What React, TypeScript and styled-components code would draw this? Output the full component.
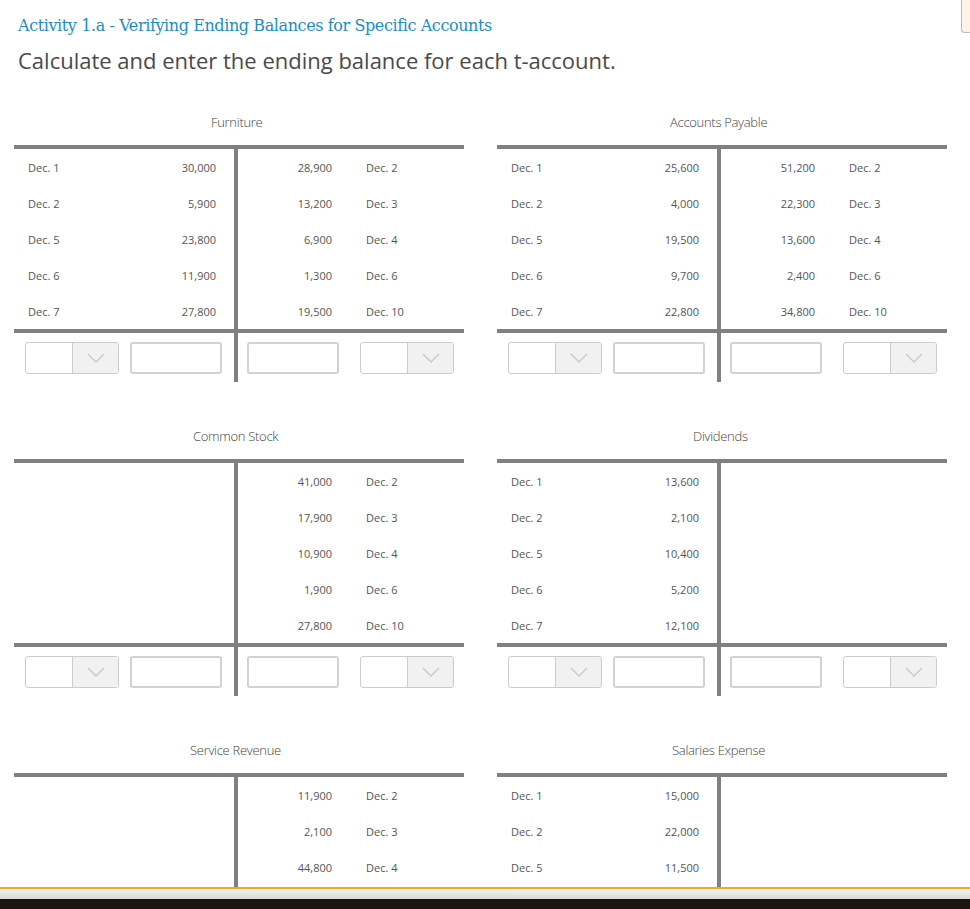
import React from "react";
import styled, { createGlobalStyle } from "styled-components";

const Global = createGlobalStyle`
  html, body { margin: 0; padding: 0; background: #fff; overflow: hidden; }
  body { font-family: "Open Sans", "Liberation Sans", sans-serif; }
`;

const Page = styled.div`
  width: 970px; height: 909px; position: relative; overflow: hidden; background: #fff;
`;
const Header = styled.div`padding: 16px 0 0 18px;`;
const Activity = styled.div`
  font-family: "DejaVu Serif", "Liberation Serif", serif; font-size: 16px; color: #1a8ec0; letter-spacing: -0.4px;
`;
const Heading = styled.h1`
  margin: 10px 0 0 0; font-weight: 400; font-size: 22px; color: #4a4a4a;
`;
const Tab = styled.div`
  position: absolute; right: 0; top: 0; width: 8px; height: 32px; background: #fdf3e8;
  border-left: 1px solid #bbb; border-bottom: 1px solid #bbb; border-bottom-left-radius: 4px;
`;
const Grid = styled.div`
  display: grid; grid-template-columns: 450px 450px; column-gap: 33px; row-gap: 46px;
  padding: 39px 0 0 14px;
`;
const Account = styled.div`display: flex; flex-direction: column;`;
const Title = styled.div<{ $shift: number }>`
  height: 31px; font-size: 13px; font-weight: 300; color: #444; letter-spacing: -0.3px;
  padding-left: ${(p) => p.$shift}px; line-height: 16px; padding-top: 0; box-sizing: border-box;
`;
const Bar = styled.div`height: 4px; background: #808080;`;
const Body = styled.div`display: grid; grid-template-columns: 220px 4px 226px;`;
const Divider = styled.div`background: #808080;`;
const Side = styled.div`display: flex; flex-direction: column;`;
const Row = styled.div`
  height: 36px; display: flex; align-items: center; font-size: 11px; color: #555;
`;
const DebitRow = styled(Row)`padding: 0 18px 0 14px; justify-content: space-between;`;
const Amount = styled.span`width: 94px; text-align: right;`;
const Label = styled.span`margin-left: 34px;`;
const InputSide = styled.div<{ $right?: boolean }>`
  display: flex; align-items: flex-start; padding: 9px 0 8px ${(p) => (p.$right ? 9 : 11)}px; gap: ${(p) => (p.$right ? 21 : 11)}px;
`;
const Select = styled.div`
  width: 94px; height: 32px; box-sizing: border-box; border: 1px solid #ccc; border-radius: 3px;
  display: flex; overflow: hidden; background: #fff;
`;
const SelBox = styled.div`flex: 1; border-right: 1px solid #ccc;`;
const SelArrow = styled.div`
  width: 45px; background: #f1f1f1; display: flex; align-items: center; justify-content: center;
`;
const TextBox = styled.div`
  width: 92px; height: 32px; box-sizing: border-box; border: 2px solid #d2d2d2; border-radius: 3px;
`;
const Footer = styled.div`
  position: absolute; left: 0; right: 0; top: 887px; height: 22px;
`;
const Orange = styled.div`height: 2px; background: #f0a81c;`;
const Fade = styled.div`height: 10px; background: linear-gradient(#f4f4f4, #d8d8d8);`;
const Dark = styled.div`height: 10px; background: #1c1510;`;

type Entry = [string, string];
type Acc = { name: string; shift: number; debit: Entry[]; credit: Entry[] };

const accounts: Acc[] = [
  { name: "Furniture", shift: 197, debit: [["Dec. 1","30,000"],["Dec. 2","5,900"],["Dec. 5","23,800"],["Dec. 6","11,900"],["Dec. 7","27,800"]],
    credit: [["Dec. 2","28,900"],["Dec. 3","13,200"],["Dec. 4","6,900"],["Dec. 6","1,300"],["Dec. 10","19,500"]] },
  { name: "Accounts Payable", shift: 173, debit: [["Dec. 1","25,600"],["Dec. 2","4,000"],["Dec. 5","19,500"],["Dec. 6","9,700"],["Dec. 7","22,800"]],
    credit: [["Dec. 2","51,200"],["Dec. 3","22,300"],["Dec. 4","13,600"],["Dec. 6","2,400"],["Dec. 10","34,800"]] },
  { name: "Common Stock", shift: 179, debit: [],
    credit: [["Dec. 2","41,000"],["Dec. 3","17,900"],["Dec. 4","10,900"],["Dec. 6","1,900"],["Dec. 10","27,800"]] },
  { name: "Dividends", shift: 196, debit: [["Dec. 1","13,600"],["Dec. 2","2,100"],["Dec. 5","10,400"],["Dec. 6","5,200"],["Dec. 7","12,100"]], credit: [] },
  { name: "Service Revenue", shift: 176, debit: [],
    credit: [["Dec. 2","11,900"],["Dec. 3","2,100"],["Dec. 4","44,800"]] },
  { name: "Salaries Expense", shift: 175, debit: [["Dec. 1","15,000"],["Dec. 2","22,000"],["Dec. 5","11,500"]], credit: [] },
];

const Chevron = () => (
  <svg width="20" height="12" viewBox="0 0 20 12"><path d="M2 2 L10 10 L18 2" fill="none" stroke="#c8c8c8" strokeWidth="1.3" /></svg>
);

const DropDown = () => (
  <Select><SelBox /><SelArrow><Chevron /></SelArrow></Select>
);

const TAccount = ({ a }: { a: Acc }) => {
  const rows = Math.max(a.debit.length, a.credit.length, 5);
  const pad = (e: Entry[]) => Array.from({ length: rows }, (_, i) => e[i]);
  return (
    <Account>
      <Title $shift={a.shift}>{a.name}</Title>
      <Bar />
      <Body>
        <Side>
          {pad(a.debit).map((e, i) => (
            <DebitRow key={i}>{e ? <><span>{e[0]}</span><span>{e[1]}</span></> : null}</DebitRow>
          ))}
        </Side>
        <Divider />
        <Side>
          {pad(a.credit).map((e, i) => (
            <Row key={i}>{e ? <><Amount>{e[1]}</Amount><Label>{e[0]}</Label></> : null}</Row>
          ))}
        </Side>
      </Body>
      <Bar />
      <Body>
        <InputSide><DropDown /><TextBox /></InputSide>
        <Divider />
        <InputSide $right><TextBox /><DropDown /></InputSide>
      </Body>
    </Account>
  );
};

export default function App() {
  return (
    <Page>
      <Global />
      <Tab />
      <Header>
        <Activity>Activity 1.a - Verifying Ending Balances for Specific Accounts</Activity>
        <Heading>Calculate and enter the ending balance for each t-account.</Heading>
      </Header>
      <Grid>
        {accounts.map((a) => <TAccount key={a.name} a={a} />)}
      </Grid>
      <Footer><Orange /><Fade /><Dark /></Footer>
    </Page>
  );
}
